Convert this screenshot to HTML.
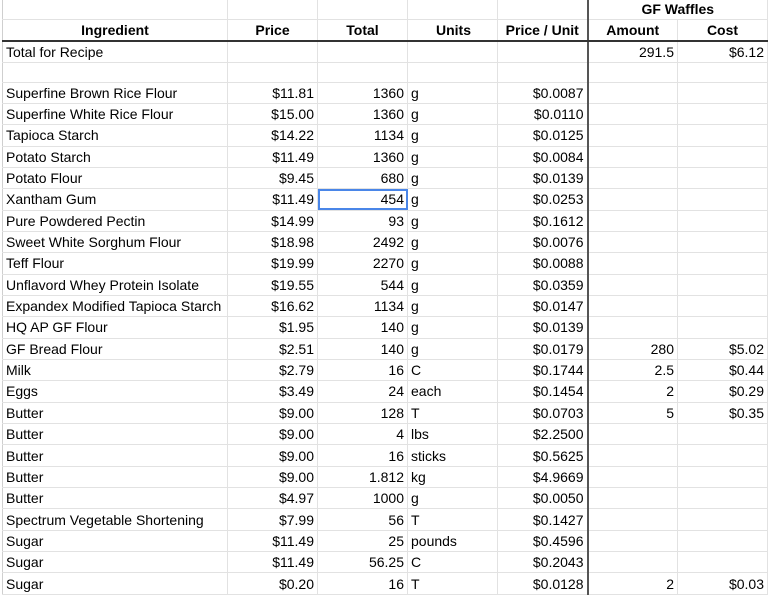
<!DOCTYPE html>
<html><head><style>
html,body{margin:0;padding:0;background:#fff;width:768px;height:596px;overflow:hidden}
table{position:absolute;left:2px;top:-2px;border-collapse:collapse;table-layout:fixed;font-family:"Liberation Sans",Arial,sans-serif;font-size:14px;color:#000}
td{border:1px solid #e2e2e2;padding:0 3px;height:21.35px;line-height:20px;white-space:nowrap;overflow:hidden;text-align:right;box-sizing:border-box}
tr.t td{height:21px}
tr.h td{height:21px}
tr.tot td{height:20.5px}
tr.b td{height:19.5px}
td:nth-child(1),td:nth-child(4){text-align:left}
td:nth-child(1){border-left:1px solid #cfcfcf}
td:nth-child(6){border-left:2px solid #555}
tr.h td{font-weight:bold;text-align:center;border-bottom:2px solid #333}
tr.t td{font-weight:bold;text-align:center}
tr.h td:nth-child(1){text-align:center}
td.sel{outline:2px solid #4a86e8;outline-offset:-2px;position:relative}
td.sel:after{content:"";position:absolute;right:-3px;bottom:-3px;width:5px;height:5px;background:#4a86e8}
</style></head><body>
<table>
<colgroup><col style="width:225px"><col style="width:90px"><col style="width:90px"><col style="width:90px"><col style="width:90px"><col style="width:90px"><col style="width:90px"></colgroup>
<tr class="t"><td></td><td></td><td></td><td></td><td></td><td colspan="2" style="border-left:2px solid #555">GF Waffles</td></tr>
<tr class="h"><td>Ingredient</td><td>Price</td><td>Total</td><td style="text-align:right;padding-right:26px">Units</td><td>Price / Unit</td><td>Amount</td><td>Cost</td></tr>
<tr class="tot"><td>Total for Recipe</td><td></td><td></td><td></td><td></td><td>291.5</td><td>$6.12</td></tr>
<tr class="b"><td></td><td></td><td></td><td></td><td></td><td></td><td></td></tr>
<tr><td>Superfine Brown Rice Flour</td><td>$11.81</td><td>1360</td><td>g</td><td>$0.0087</td><td></td><td></td></tr>
<tr><td>Superfine White Rice Flour</td><td>$15.00</td><td>1360</td><td>g</td><td>$0.0110</td><td></td><td></td></tr>
<tr><td>Tapioca Starch</td><td>$14.22</td><td>1134</td><td>g</td><td>$0.0125</td><td></td><td></td></tr>
<tr><td>Potato Starch</td><td>$11.49</td><td>1360</td><td>g</td><td>$0.0084</td><td></td><td></td></tr>
<tr><td>Potato Flour</td><td>$9.45</td><td>680</td><td>g</td><td>$0.0139</td><td></td><td></td></tr>
<tr><td>Xantham Gum</td><td>$11.49</td><td class="sel">454</td><td>g</td><td>$0.0253</td><td></td><td></td></tr>
<tr><td>Pure Powdered Pectin</td><td>$14.99</td><td>93</td><td>g</td><td>$0.1612</td><td></td><td></td></tr>
<tr><td>Sweet White Sorghum Flour</td><td>$18.98</td><td>2492</td><td>g</td><td>$0.0076</td><td></td><td></td></tr>
<tr><td>Teff Flour</td><td>$19.99</td><td>2270</td><td>g</td><td>$0.0088</td><td></td><td></td></tr>
<tr><td>Unflavord Whey Protein Isolate</td><td>$19.55</td><td>544</td><td>g</td><td>$0.0359</td><td></td><td></td></tr>
<tr><td>Expandex Modified Tapioca Starch</td><td>$16.62</td><td>1134</td><td>g</td><td>$0.0147</td><td></td><td></td></tr>
<tr><td>HQ AP GF Flour</td><td>$1.95</td><td>140</td><td>g</td><td>$0.0139</td><td></td><td></td></tr>
<tr><td>GF Bread Flour</td><td>$2.51</td><td>140</td><td>g</td><td>$0.0179</td><td>280</td><td>$5.02</td></tr>
<tr><td>Milk</td><td>$2.79</td><td>16</td><td>C</td><td>$0.1744</td><td>2.5</td><td>$0.44</td></tr>
<tr><td>Eggs</td><td>$3.49</td><td>24</td><td>each</td><td>$0.1454</td><td>2</td><td>$0.29</td></tr>
<tr><td>Butter</td><td>$9.00</td><td>128</td><td>T</td><td>$0.0703</td><td>5</td><td>$0.35</td></tr>
<tr><td>Butter</td><td>$9.00</td><td>4</td><td>lbs</td><td>$2.2500</td><td></td><td></td></tr>
<tr><td>Butter</td><td>$9.00</td><td>16</td><td>sticks</td><td>$0.5625</td><td></td><td></td></tr>
<tr><td>Butter</td><td>$9.00</td><td>1.812</td><td>kg</td><td>$4.9669</td><td></td><td></td></tr>
<tr><td>Butter</td><td>$4.97</td><td>1000</td><td>g</td><td>$0.0050</td><td></td><td></td></tr>
<tr><td>Spectrum Vegetable Shortening</td><td>$7.99</td><td>56</td><td>T</td><td>$0.1427</td><td></td><td></td></tr>
<tr><td>Sugar</td><td>$11.49</td><td>25</td><td>pounds</td><td>$0.4596</td><td></td><td></td></tr>
<tr><td>Sugar</td><td>$11.49</td><td>56.25</td><td>C</td><td>$0.2043</td><td></td><td></td></tr>
<tr><td>Sugar</td><td>$0.20</td><td>16</td><td>T</td><td>$0.0128</td><td>2</td><td>$0.03</td></tr>
</table>
</body></html>
